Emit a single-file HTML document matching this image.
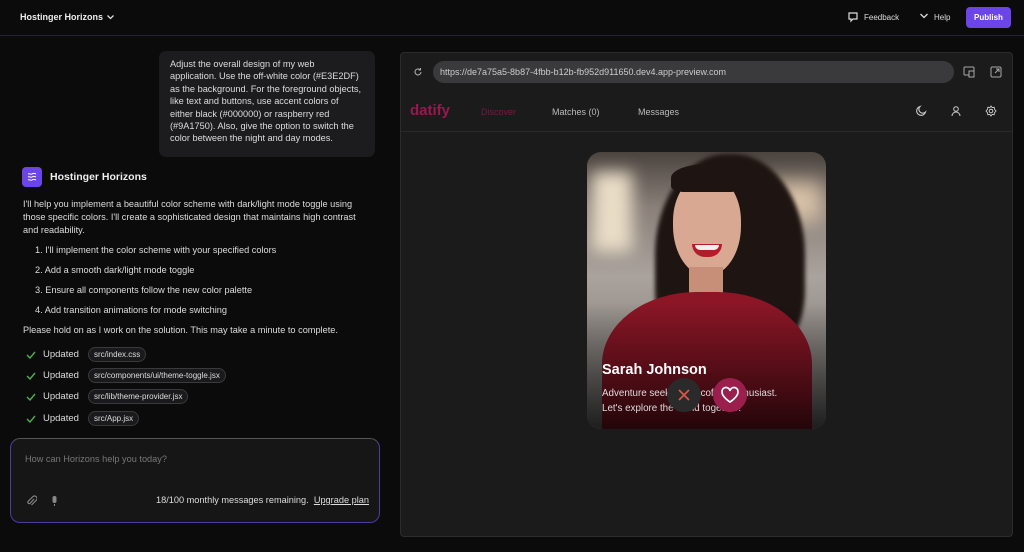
<!DOCTYPE html>
<html><head><meta charset="utf-8"><style>
*{box-sizing:border-box;margin:0;padding:0}
body{width:1024px;height:552px;background:#0b0b0c;font-family:"Liberation Sans",sans-serif;color:#e6e6e6;position:relative;overflow:hidden}
.abs{position:absolute}
.top{left:0;top:0;width:1024px;height:36px;border-bottom:1px solid #24223a}
.t{font-size:9px;color:#ddd;white-space:nowrap}
.chip{display:inline-block;border:1px solid #3a3a3d;background:#1a1a1c;border-radius:8px;padding:2px 5px;font-size:8px;color:#ddd}
.row{position:absolute;left:26px;font-size:9.5px;color:#ddd;display:flex;align-items:center}
.row svg{margin-right:7px}
.row span.u{width:45px}
</style></head><body>
<div class="abs top"></div>
<div class="abs t" style="left:20px;top:12px;font-size:9px;font-weight:bold;color:#eee">Hostinger Horizons</div>
<svg class="abs" style="left:106px;top:13px" width="9" height="8" viewBox="0 0 9 8"><path d="M1.5 2.5L4.5 5.5L7.5 2.5" stroke="#ddd" stroke-width="1.3" fill="none"/></svg>
<svg class="abs" style="left:847px;top:11px" width="12" height="12" viewBox="0 0 12 12"><path d="M2 2h8v6H6l-2 2V8H2z" stroke="#ddd" stroke-width="1.2" fill="none"/></svg>
<div class="abs t" style="left:864px;top:13px;font-size:8px">Feedback</div>
<svg class="abs" style="left:919px;top:12px" width="10" height="8" viewBox="0 0 10 8"><path d="M1.5 2L5 5.5L8.5 2" stroke="#ddd" stroke-width="1.3" fill="none"/></svg>
<div class="abs t" style="left:934px;top:13px;font-size:8px">Help</div>
<div class="abs" style="left:966px;top:7px;width:45px;height:21px;background:#6b45e8;border-radius:4px;color:#fff;font-size:8px;font-weight:bold;text-align:center;line-height:21px">Publish</div>

<div class="abs" style="left:159px;top:51px;width:216px;height:106px;background:#1c1c1e;border-radius:7px"></div>
<div class="abs" style="left:170px;top:58px;width:192px;font-size:9.2px;line-height:12.4px;color:#ddd">Adjust the overall design of my web application. Use the off-white color (#E3E2DF) as the background. For the foreground objects, like text and buttons, use accent colors of either black (#000000) or raspberry red (#9A1750). Also, give the option to switch the color between the night and day modes.</div>

<div class="abs" style="left:22px;top:167px;width:20px;height:20px;background:#6b45e8;border-radius:4px"></div>
<svg class="abs" style="left:26px;top:171px" width="12" height="12" viewBox="0 0 12 12"><path d="M2 3c2-1 3 1 4 0s2-1 4 0M2 6c2-1 3 1 4 0s2-1 4 0M2 9c2-1 3 1 4 0s2-1 4 0" stroke="#fff" stroke-width="1" fill="none"/></svg>
<div class="abs t" style="left:50px;top:171px;font-size:10.5px;font-weight:bold;color:#eee">Hostinger Horizons</div>
<div class="abs" style="left:23px;top:198px;width:348px;font-size:9.2px;line-height:12.8px;color:#ddd">I'll help you implement a beautiful color scheme with dark/light mode toggle using those specific colors. I'll create a sophisticated design that maintains high contrast and readability.</div>
<div class="abs t" style="left:35px;top:245px;font-size:9.2px">1. I'll implement the color scheme with your specified colors</div>
<div class="abs t" style="left:35px;top:265px;font-size:9.2px">2. Add a smooth dark/light mode toggle</div>
<div class="abs t" style="left:35px;top:285px;font-size:9.2px">3. Ensure all components follow the new color palette</div>
<div class="abs t" style="left:35px;top:305px;font-size:9.2px">4. Add transition animations for mode switching</div>
<div class="abs t" style="left:23px;top:325px;font-size:9.2px">Please hold on as I work on the solution. This may take a minute to complete.</div>
<div class="row" style="top:347px"><svg width="10" height="8" viewBox="0 0 10 8"><path d="M1 4l3 3 5-6" stroke="#4caf50" stroke-width="1.4" fill="none"/></svg><span class="u">Updated</span><span class="chip">src/index.css</span></div>
<div class="row" style="top:368px"><svg width="10" height="8" viewBox="0 0 10 8"><path d="M1 4l3 3 5-6" stroke="#4caf50" stroke-width="1.4" fill="none"/></svg><span class="u">Updated</span><span class="chip">src/components/ui/theme-toggle.jsx</span></div>
<div class="row" style="top:389px"><svg width="10" height="8" viewBox="0 0 10 8"><path d="M1 4l3 3 5-6" stroke="#4caf50" stroke-width="1.4" fill="none"/></svg><span class="u">Updated</span><span class="chip">src/lib/theme-provider.jsx</span></div>
<div class="row" style="top:411px"><svg width="10" height="8" viewBox="0 0 10 8"><path d="M1 4l3 3 5-6" stroke="#4caf50" stroke-width="1.4" fill="none"/></svg><span class="u">Updated</span><span class="chip">src/App.jsx</span></div>

<div class="abs" style="left:10px;top:438px;width:370px;height:85px;background:#161617;border:1px solid #4a3fa0;border-top-color:#555;border-radius:10px"></div>
<div class="abs t" style="left:25px;top:454px;font-size:9.2px;color:#777">How can Horizons help you today?</div>
<svg class="abs" style="left:26px;top:495px" width="11" height="12" viewBox="0 0 11 12"><path d="M8 4L4 8.5a1.5 1.5 0 0 1-2-2L7 1.5a2.5 2.5 0 0 1 3.5 3.5L5.5 10" stroke="#888" stroke-width="1.1" fill="none"/></svg>
<svg class="abs" style="left:51px;top:495px" width="7" height="12" viewBox="0 0 7 12"><rect x="1.5" y="1" width="4" height="7" rx="2" fill="#888"/><path d="M3.5 9v2" stroke="#888"/></svg>
<div class="abs t" style="left:156px;top:495px;font-size:9.2px">18/100 monthly messages remaining. &nbsp;<u>Upgrade plan</u></div>

<div class="abs" style="left:400px;top:52px;width:613px;height:485px;background:#1b1b1c;border:1px solid #2c2c2e;border-radius:4px"></div>
<svg class="abs" style="left:413px;top:67px" width="10" height="10" viewBox="0 0 10 10"><path d="M8 5a3 3 0 1 1-1-2.3M7.5 1v2h-2" stroke="#aaa" stroke-width="1.1" fill="none"/></svg>
<div class="abs" style="left:433px;top:61px;width:521px;height:22px;background:#3a3a3d;border-radius:11px"></div>
<div class="abs t" style="left:440px;top:67px;font-size:9px;color:#ccc">https://de7a75a5-8b87-4fbb-b12b-fb952d911650.dev4.app-preview.com</div>
<svg class="abs" style="left:963px;top:66px" width="13" height="12" viewBox="0 0 13 12"><rect x="1" y="1" width="10" height="8" rx="1" stroke="#aaa" fill="none"/><rect x="6" y="5" width="5" height="6" fill="#1b1b1c" stroke="#aaa"/></svg>
<svg class="abs" style="left:990px;top:66px" width="12" height="12" viewBox="0 0 12 12"><rect x="1" y="1" width="10" height="10" rx="1.5" stroke="#aaa" fill="none"/><path d="M5 7l4-4M6 3h3v3" stroke="#aaa" fill="none"/></svg>
<div class="abs" style="left:401px;top:131px;width:611px;height:1px;background:#2a2a2c"></div>
<div class="abs" style="left:410px;top:102px;font-size:15px;color:#9a1750;font-weight:bold">datify</div>
<div class="abs t" style="left:481px;top:107px;font-size:9px;color:#7a1a40">Discover</div>
<div class="abs t" style="left:552px;top:107px;font-size:9px;color:#bbb">Matches (0)</div>
<div class="abs t" style="left:638px;top:107px;font-size:9px;color:#bbb">Messages</div>
<svg class="abs" style="left:915px;top:105px" width="12" height="12" viewBox="0 0 12 12"><path d="M5 1.5a4.5 4.5 0 1 0 5.5 5.5A3.5 3.5 0 0 1 5 1.5z" stroke="#ccc" stroke-width="1.1" fill="none"/></svg>
<svg class="abs" style="left:950px;top:105px" width="12" height="12" viewBox="0 0 12 12"><circle cx="6" cy="4" r="2.3" stroke="#ccc" fill="none"/><path d="M2 11a4 4 0 0 1 8 0" stroke="#ccc" fill="none"/></svg>
<svg class="abs" style="left:985px;top:105px" width="12" height="12" viewBox="0 0 12 12"><circle cx="6" cy="6" r="1.8" stroke="#ccc" fill="none"/><path d="M6 1l1.2 1.6 2-.3.3 2L11 6l-1.5 1.7-.3 2-2 -.3L6 11l-1.2-1.6-2 .3-.3-2L1 6l1.5-1.7.3-2 2 .3z" stroke="#ccc" stroke-width="0.9" fill="none"/></svg>

<div class="abs" style="left:587px;top:152px;width:239px;height:277px;border-radius:14px;overflow:hidden;background:linear-gradient(180deg,#4a433e 0%,#8a8079 20%,#aaa39d 45%,#8f8985 70%,#777 100%)">
 <div class="abs" style="left:5px;top:20px;width:40px;height:80px;background:#e8dcc6;filter:blur(8px)"></div>
 <div class="abs" style="left:175px;top:30px;width:60px;height:40px;background:#d8c2a8;filter:blur(10px)"></div>
 <div class="abs" style="left:68px;top:2px;width:150px;height:210px;background:#1e1512;border-radius:48% 48% 35% 35%;filter:blur(2px)"></div>
 <div class="abs" style="left:86px;top:24px;width:68px;height:100px;background:#d9a892;border-radius:45% 45% 50% 50%"></div>
 <div class="abs" style="left:84px;top:12px;width:72px;height:28px;background:#1e1512;border-radius:50% 50% 20% 20%"></div>
 <div class="abs" style="left:105px;top:92px;width:30px;height:13px;background:#b31c2a;border-radius:0 0 15px 15px"></div>
 <div class="abs" style="left:108px;top:93px;width:24px;height:5px;background:#f2eeea;border-radius:0 0 8px 8px"></div>
 <div class="abs" style="left:102px;top:115px;width:34px;height:35px;background:#c78e78"></div>
 <div class="abs" style="left:15px;top:140px;width:210px;height:160px;background:#8c1626;border-radius:45% 45% 0 0"></div>
 <div class="abs" style="left:0;top:150px;width:239px;height:127px;background:linear-gradient(180deg,rgba(0,0,0,0),rgba(0,0,0,.75))"></div>
 <div class="abs" style="left:15px;top:210px;font-size:14.5px;font-weight:bold;color:#fff">Sarah Johnson</div>
 <div class="abs" style="left:15px;top:234px;font-size:9.8px;line-height:15px;color:#ddd;width:182px">Adventure seeker and coffee enthusiast. Let's explore the world together!</div>
 <div class="abs" style="left:80px;top:226px;width:34px;height:34px;border-radius:50%;background:#2a2a2b"></div>
 <svg class="abs" style="left:90px;top:236px" width="14" height="14" viewBox="0 0 14 14"><path d="M2 2l10 10M12 2L2 12" stroke="#e0574a" stroke-width="1.6"/></svg>
 <div class="abs" style="left:126px;top:226px;width:34px;height:34px;border-radius:50%;background:#9a1f4c"></div>
 <svg class="abs" style="left:133px;top:234px" width="20" height="18" viewBox="0 0 20 18"><path d="M10 16S2 11 2 6a4 4 0 0 1 8-1 4 4 0 0 1 8 1c0 5-8 10-8 10z" stroke="#fff" stroke-width="1.7" fill="none"/></svg>
</div>
</body></html>
